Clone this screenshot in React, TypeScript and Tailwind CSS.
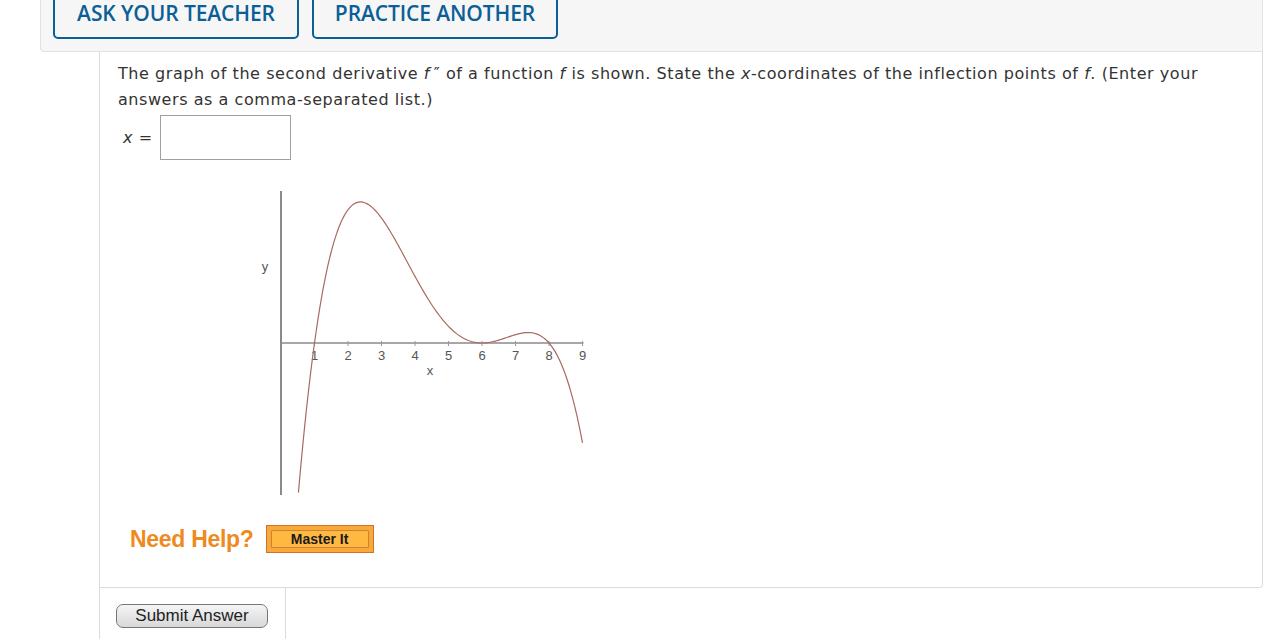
import { FC } from 'react'

const X0 = 26
const Y0 = 159
const UX = 33.5
const UY = 1.388

const f2 = (x: number) => -(x - 1) * (x - 6) * (x - 6) * (x - 8)

const curvePath = () => {
  const pts: string[] = []
  for (let x = 0.52; x <= 9.0001; x += 0.04) {
    const px = X0 + x * UX
    const py = Y0 - f2(x) * UY
    pts.push(`${px.toFixed(2)},${py.toFixed(2)}`)
  }
  return 'M' + pts.join(' L')
}

const Graph: FC = () => {
  const ticks = [1, 2, 3, 4, 5, 6, 7, 8, 9]
  return (
    <svg width="345" height="320" viewBox="0 0 345 320" className="block">
      <line x1={X0} y1={7} x2={X0} y2={311} stroke="#8a8a8a" strokeWidth="2" />
      <line x1={X0} y1={Y0} x2={X0 + 9 * UX + 1} y2={Y0} stroke="#8a8a8a" strokeWidth="1.5" />
      {ticks.map((t) => (
        <line key={t} x1={X0 + t * UX} y1={Y0 - 2} x2={X0 + t * UX} y2={Y0 + 3} stroke="#999" strokeWidth="1" />
      ))}
      {ticks.map((t) => (
        <text
          key={'l' + t}
          x={X0 + t * UX}
          y={Y0 + 17}
          textAnchor="middle"
          fontFamily="'Liberation Sans', Arial, sans-serif"
          fontSize="13"
          fill="#555"
        >
          {t}
        </text>
      ))}
      <text x={175} y={191} textAnchor="middle" fontFamily="'Liberation Sans', Arial, sans-serif" fontSize="13" fill="#555">
        x
      </text>
      <text x={10} y={87} textAnchor="middle" fontFamily="'Liberation Sans', Arial, sans-serif" fontSize="13" fill="#555">
        y
      </text>
      <path d={curvePath()} fill="none" stroke="#a86a5e" strokeWidth="1.2" />
    </svg>
  )
}

export default function App() {
  return (
    <div className="w-[1284px] h-[639px] overflow-hidden bg-white">
      <div className="ml-[40px] w-[1223px]">
        <div className="-mt-[12px] bg-[#f6f6f6] border border-t-0 border-[#e2e2e2] rounded-bl-[4px] flex gap-[13px] pl-[12px] pb-[12px]">
          {['ASK YOUR TEACHER', 'PRACTICE ANOTHER'].map((label) => (
            <div
              key={label}
              className="w-[246px] h-[51px] border-2 border-[#0b5f97] rounded-[5px] bg-[#f6f6f6] flex items-center justify-center pt-[1px] text-[21px] font-semibold text-[#0b5f97] tracking-[-0.1px]"
              style={{ fontFamily: "'Open Sans', sans-serif" }}
            >
              {label}
            </div>
          ))}
        </div>
        <div className="ml-[59px] h-[536px] border-x border-b border-[#dcdcdc] rounded-br-[4px] bg-white pl-[18px] pr-[18px] pt-[9px]">
          <p
            className="text-[16px] leading-[26px] text-[#333] tracking-[0.56px]"
            style={{ fontFamily: "'DejaVu Sans', Verdana, sans-serif" }}
          >
            The graph of the second derivative <i>f</i>&thinsp;″ of a function <i>f</i> is shown. State the <i>x</i>-coordinates of the inflection points of <i>f</i>. (Enter your answers as a comma-separated list.)
          </p>
          <div className="flex items-center mt-[2px] ml-[5px]" style={{ fontFamily: "'DejaVu Sans', Verdana, sans-serif" }}>
            <span className="text-[16px] text-[#333] tracking-[0.56px]">
              <i>x</i> =
            </span>
            <div className="ml-[7px] w-[131px] h-[45px] border border-[#a0a0a0] bg-white" />
          </div>
          <div className="ml-[137px] mt-[24px]">
            <Graph />
          </div>
          <div className="flex items-center mt-[18px] ml-[12px]" style={{ fontFamily: "'Liberation Sans', Arial, sans-serif" }}>
            <span className="text-[23px] font-bold text-[#ee8a1e] tracking-[-0.3px]">Need Help?</span>
            <div className="ml-[12px] w-[108px] h-[28px] border border-[#cf7420] bg-[#f9a93b] p-[4px] flex">
              <div className="flex-1 border border-[#c98432] bg-[#ffb942] rounded-[1px] flex items-center justify-center text-[14px] font-bold text-[#1a1a1a]">
                Master It
              </div>
            </div>
          </div>
        </div>
        <div className="ml-[59px] w-[187px] h-[60px] border-x border-b border-[#dcdcdc] rounded-b-[4px] bg-white pl-[16px] pt-[16px]">
          <div
            className="w-[152px] h-[24px] rounded-[7px] border border-[#777] bg-gradient-to-b from-[#f5f5f5] to-[#d8d8d8] flex items-center justify-center text-[17px] text-[#222]"
            style={{ fontFamily: "'Liberation Sans', Arial, sans-serif" }}
          >
            Submit Answer
          </div>
        </div>
      </div>
    </div>
  )
}
